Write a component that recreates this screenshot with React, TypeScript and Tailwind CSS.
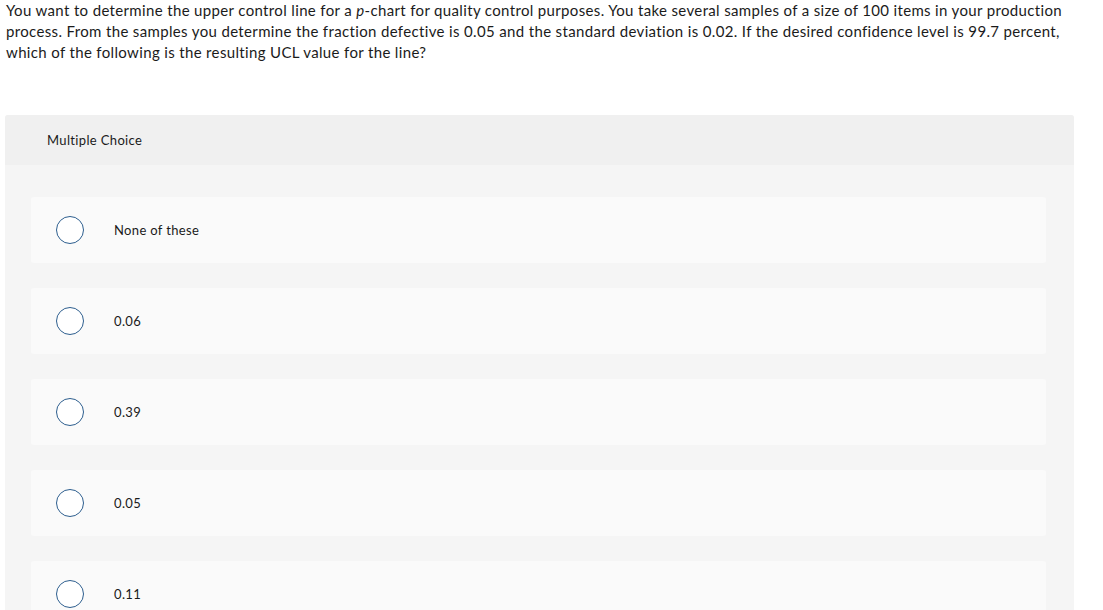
const options = ['None of these', '0.06', '0.39', '0.05', '0.11'];

export default function App() {
  return (
    <div className="min-h-[610px] bg-white text-[#1b1b1b]" style={{ fontFamily: 'Lato, "Open Sans", sans-serif' }}>
      {/* Question */}
      <p className="pl-[6px] pt-0 text-[15px] leading-[21px] tracking-[0.35px]">
        You want to determine the upper control line for a <i>p</i>-chart for quality control purposes. You take several samples of a size of 100 items in your production
        <br />
        process. From the samples you determine the fraction defective is 0.05 and the standard deviation is 0.02. If the desired confidence level is 99.7 percent,
        <br />
        which of the following is the resulting UCL value for the line?
      </p>

      {/* Choices panel */}
      <div className="mt-[52px] ml-[5px] w-[1069px] overflow-hidden rounded-t-[3px] bg-[#f5f5f5]">
        <div className="flex h-[50px] items-center bg-[#f0f0f0] pl-[42px] pt-[2px] text-[13px] tracking-[0.35px]">Multiple Choice</div>
        <div className="flex flex-col gap-[25px] pt-[32px] pl-[26px] pr-[28px] pb-[20px]">
          {options.map(opt => (
            <div key={opt} className="flex h-[66px] items-center rounded-[3px] bg-[#fafafa]">
              <span className="ml-[25px] h-[28px] w-[28px] shrink-0 rounded-full border-[1.5px] border-[#2d5e8e] bg-white" />
              <span className="ml-[30px] pt-[2px] text-[13px] tracking-[0.35px]">{opt}</span>
            </div>
          ))}
        </div>
      </div>
    </div>
  );
}
